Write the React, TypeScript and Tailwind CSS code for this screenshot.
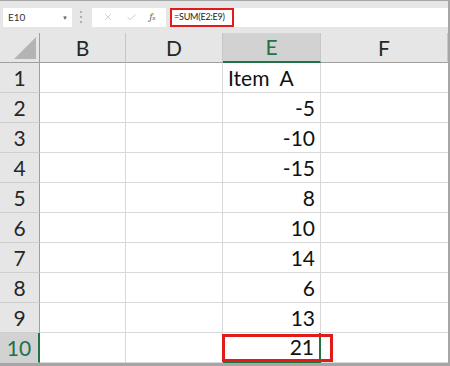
import { X, Check } from 'lucide-react'

const values: (string | number)[] = ['Item  A', -5, -10, -15, 8, 10, 14, 6, 13, 21]
const font = { fontFamily: 'Lato, "Open Sans", sans-serif' }

function ColHeader({ label, active }: { label: string; active?: boolean }) {
  return (
    <div
      className={
        'flex items-center justify-center border-r border-b text-[21px] ' +
        (active
          ? 'border-r-[#c6c6c6] border-b-2 border-b-[#217346] bg-[#d2d2d2] text-[#217346]'
          : 'border-r-[#c6c6c6] border-b-[#9f9f9f] bg-[#e6e6e6] text-[#262626]')
      }
    >
      {label}
    </div>
  )
}

export default function App() {
  return (
    <div
      className="relative h-[366px] w-[450px] overflow-hidden border-t border-r-2 border-b-[3px] border-[#a6a6a6] bg-white"
      style={font}
    >
      {/* formula bar */}
      <div className="flex h-[32px] items-center gap-0 bg-[#e6e6e6] pl-[3px]">
        <div className="flex h-[19px] w-[69px] items-center justify-between bg-white pl-[5px] pr-[4px] text-[10px] text-[#333]">
          <span>E10</span>
          <span className="text-[6px] text-[#666]">▼</span>
        </div>
        <div className="ml-[8px] flex h-[12px] w-[3px] flex-col justify-between">
          <span className="h-[2px] w-[2px] bg-[#b0b0b0]" />
          <span className="h-[2px] w-[2px] bg-[#b0b0b0]" />
          <span className="h-[2px] w-[2px] bg-[#b0b0b0]" />
        </div>
        <div className="ml-[9px] flex h-[19px] w-[74px] items-center justify-around bg-white px-[4px] text-[#b5b5b5]">
          <X size={10} strokeWidth={1.5} />
          <Check size={11} strokeWidth={1.5} />
          <span className="font-serif text-[10px] italic text-[#666]">
            f<span className="text-[7px]">x</span>
          </span>
        </div>
        <div className="ml-[4px] flex h-[19px] flex-1 items-center bg-white">
          <div className="flex h-[19px] w-[64px] items-center overflow-hidden whitespace-nowrap border-2 border-[#e01b1b] pl-[2px] text-[9px] tracking-[-0.2px] text-[#222]">
            =SUM(E2:E9)
          </div>
        </div>
      </div>

      {/* sheet grid */}
      <div className="grid grid-cols-[40px_86px_97px_98px_1fr] grid-rows-[30px_repeat(10,30px)]">
        <div className="relative border-r border-b border-r-[#9f9f9f] border-b-[#9f9f9f] bg-[#e6e6e6]">
          <div
            className="absolute right-[3px] bottom-[3px] h-0 w-0"
            style={{ borderLeft: '22px solid transparent', borderBottom: '22px solid #b4b4b4' }}
          />
        </div>
        <ColHeader label="B" />
        <ColHeader label="D" />
        <ColHeader label="E" active />
        <ColHeader label="F" />

        {values.map((v, i) => {
          const last = i === values.length - 1
          return [
            <div
              key={'h' + i}
              className={
                'flex items-center justify-center border-b border-b-[#cfcfcf] text-[21px] ' +
                (last
                  ? 'border-r-2 border-r-[#217346] bg-[#d2d2d2] text-[#217346]'
                  : 'border-r border-r-[#9f9f9f] bg-[#e6e6e6] text-[#262626]')
              }
            >
              {i + 1}
            </div>,
            <div key={'b' + i} className="border-r border-b border-[#d9d9d9]" />,
            <div key={'d' + i} className="border-r border-b border-[#d9d9d9]" />,
            <div
              key={'e' + i}
              className={
                'flex items-center text-[21px] text-[#111] ' +
                (i === 0 ? 'justify-start pl-[5px] ' : 'justify-end pr-[5px] ') +
                (last ? 'border-r-2 border-b-2 border-[#217346]' : 'border-r border-b border-[#d9d9d9]')
              }
            >
              <span className="whitespace-pre">{v}</span>
            </div>,
            <div key={'f' + i} className="border-b border-[#d9d9d9]" />,
          ]
        })}
      </div>

      {/* annotation box round the result cell */}
      <div className="absolute top-[333px] left-[222px] h-[28px] w-[111px] border-[3px] border-[#e01b1b]" />
    </div>
  )
}
